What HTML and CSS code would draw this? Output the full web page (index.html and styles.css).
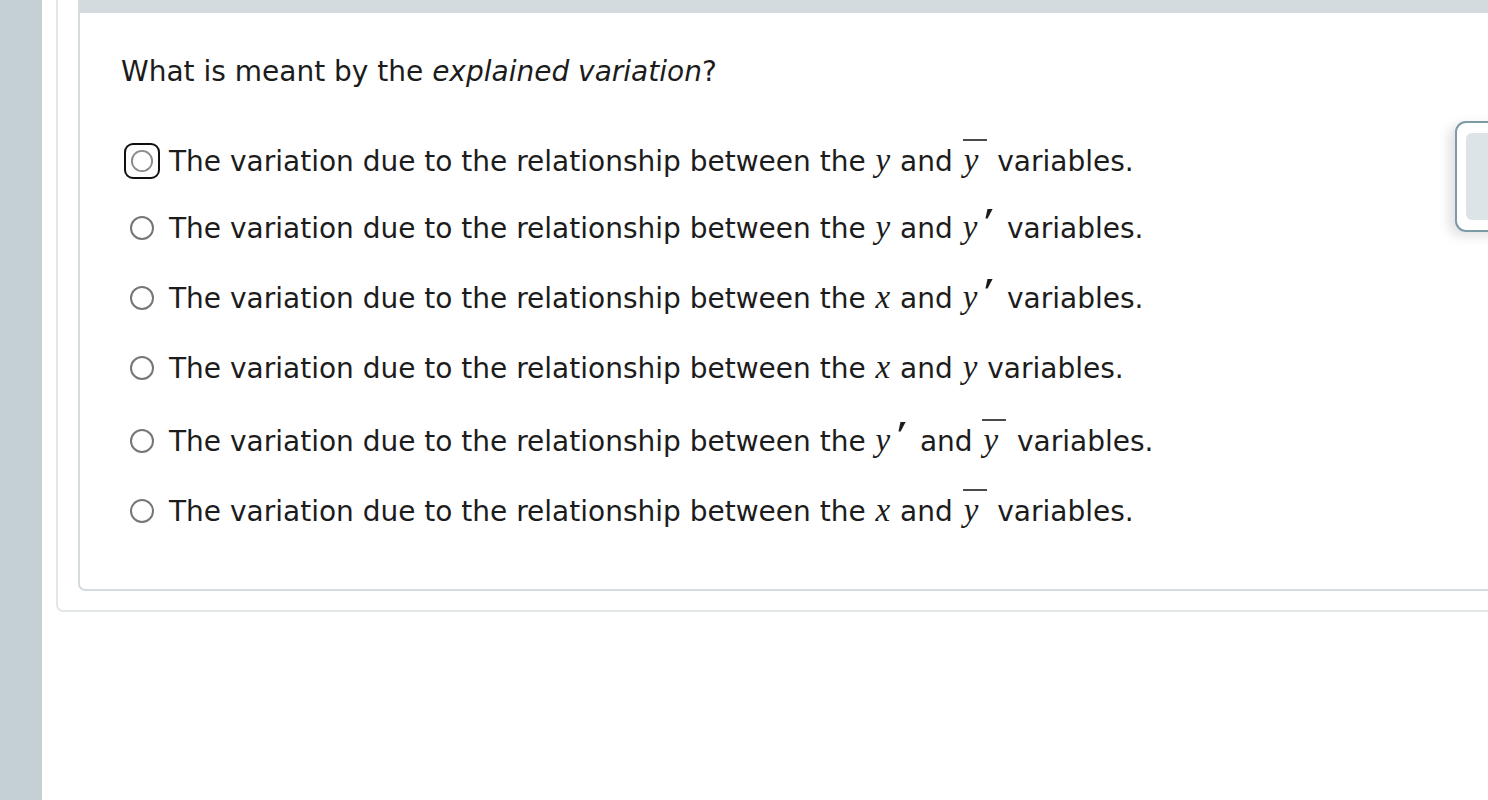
FILE: index.html
```html
<!DOCTYPE html>
<html lang="en">
<head>
<meta charset="utf-8">
<title>Explained variation</title>
<link rel="stylesheet" href="styles.css">
</head>
<body>
<div class="sidebar"></div>
<div class="main">
  <div class="outer-card">
    <div class="inner-card">
      <p class="question">What is meant by the <em>explained variation</em>?</p>
      <div class="options">
        <div class="option tall">
          <span class="radio focused"><span class="circle"></span></span>
          <span class="label">The variation due to the relationship between the <span class="m">y</span> and <span class="m bar">y</span> variables.</span>
        </div>
        <div class="option">
          <span class="radio"><span class="circle"></span></span>
          <span class="label">The variation due to the relationship between the <span class="m">y</span> and <span class="m">y</span><span class="prime">′</span> variables.</span>
        </div>
        <div class="option">
          <span class="radio"><span class="circle"></span></span>
          <span class="label">The variation due to the relationship between the <span class="m">x</span> and <span class="m">y</span><span class="prime">′</span> variables.</span>
        </div>
        <div class="option">
          <span class="radio"><span class="circle"></span></span>
          <span class="label">The variation due to the relationship between the <span class="m">x</span> and <span class="m">y</span> variables.</span>
        </div>
        <div class="option tall">
          <span class="radio"><span class="circle"></span></span>
          <span class="label">The variation due to the relationship between the <span class="m">y</span><span class="prime">′</span> and <span class="m bar">y</span> variables.</span>
        </div>
        <div class="option tall">
          <span class="radio"><span class="circle"></span></span>
          <span class="label">The variation due to the relationship between the <span class="m">x</span> and <span class="m bar">y</span> variables.</span>
        </div>
      </div>
    </div>
  </div>
</div>
<div class="float-widget"><div class="float-inner"></div></div>
</body>
</html>
```
FILE: styles.css
```css
html, body {
  margin: 0;
  padding: 0;
  height: 100%;
  overflow: hidden;
  background: #ffffff;
}
body {
  display: flex;
  font-family: "DejaVu Sans", Verdana, sans-serif;
  color: #1c1c1c;
}
.sidebar {
  width: 42px;
  flex: none;
  background: #c5d0d5;
}
.main {
  flex: 1;
  padding-left: 14px;
  overflow: hidden;
}
.outer-card {
  width: 1500px;
  border: 2px solid #e2e8ea;
  border-top: none;
  border-radius: 0 0 0 7px;
  padding: 0 0 19px 20px;
}
.inner-card {
  border: 2px solid #d3dbde;
  border-top: 13px solid #d3dbde;
  border-right: none;
  border-radius: 0 0 0 7px;
  padding: 44px 0 46px 41px;
}
.question {
  margin: 0;
  font-size: 28px;
  line-height: 30px;
}
.question em {
  font-style: italic;
}
.options {
  margin-top: 36px;
}
.option {
  display: flex;
  align-items: center;
  height: 70px;
  box-sizing: border-box;
}
.option.tall {
  padding-top: 6px;
}
.radio {
  position: relative;
  flex: none;
  width: 24px;
  height: 24px;
  margin-left: 9px;
  margin-right: 15px;
}
.circle {
  display: block;
  width: 24px;
  height: 24px;
  box-sizing: border-box;
  border: 2px solid #767676;
  border-radius: 50%;
  background: #fff;
}
.radio.focused::before {
  content: "";
  position: absolute;
  left: -6px;
  top: -6px;
  width: 36px;
  height: 36px;
  box-sizing: border-box;
  border: 2px solid #101010;
  border-radius: 9px;
}
.radio.focused .circle {
  border-color: #8a8a8a;
  transform: scale(0.92);
}
.label {
  font-size: 28px;
  line-height: 34px;
  white-space: nowrap;
}
.m {
  font-family: "Liberation Serif", "Times New Roman", serif;
  font-style: italic;
  font-size: 33px;
  position: relative;
  display: inline-block;
  padding: 0 1px;
}
.m.bar {
  padding: 0 11px 0 2px;
  margin-right: -1px;
}
.m.bar::before {
  content: "";
  position: absolute;
  left: 1px;
  width: 24px;
  top: -4px;
  height: 2px;
  background: #4a4a4a;
}
.prime {
  display: inline-block;
  font-family: "DejaVu Sans", sans-serif;
  font-size: 52px;
  line-height: 0;
  position: relative;
  top: 9px;
  margin-left: 9px;
  margin-right: -1px;
  color: #1c1c1c;
  transform: skewX(14deg);
}
.float-widget {
  position: absolute;
  left: 1455px;
  top: 121px;
  width: 80px;
  height: 111px;
  box-sizing: border-box;
  border: 2px solid #7c9ba5;
  border-radius: 11px;
  background: #fff;
  box-shadow: -6px 4px 12px rgba(0, 0, 0, 0.12);
  padding: 10px 0 10px 9px;
}
.float-inner {
  height: 100%;
  background: #dde4e7;
  border-radius: 6px;
}
```
